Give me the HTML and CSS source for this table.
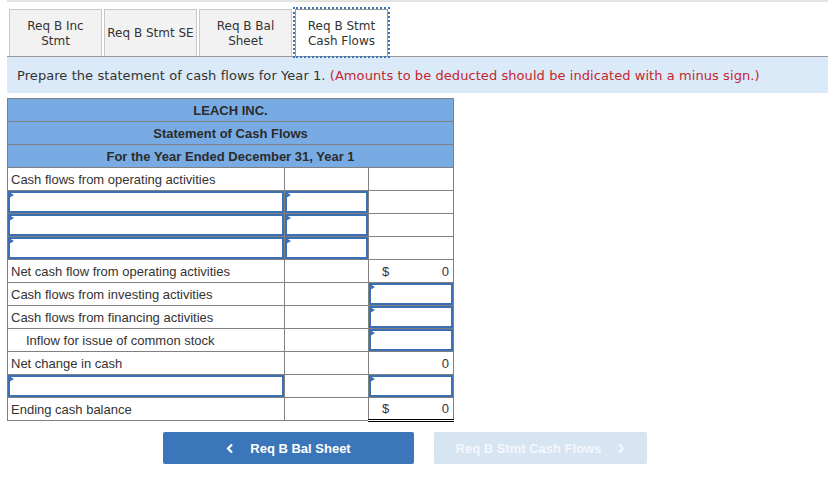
FILE: index.html
```html
<!DOCTYPE html>
<html>
<head>
<meta charset="utf-8">
<link rel="stylesheet" href="styles.css">
</head>
<body>
<div class="page">
  <div class="topbar"></div>
  <div class="tabs">
    <div class="tab">Req B Inc<br>Stmt</div>
    <div class="tab">Req B Stmt SE</div>
    <div class="tab">Req B Bal<br>Sheet</div>
    <div class="tab active">Req B Stmt<br>Cash Flows</div>
  </div>
  <div class="instr"><p class="instr-text">Prepare the statement of cash flows for Year 1. <span class="red">(Amounts to be deducted should be indicated with a minus sign.)</span></p></div>
  <table class="sheet">
    <colgroup><col class="c1"><col class="c2"><col class="c3"></colgroup>
    <tr class="hd"><td colspan="3">LEACH INC.</td></tr>
    <tr class="hd"><td colspan="3">Statement of Cash Flows</td></tr>
    <tr class="hd"><td colspan="3">For the Year Ended December 31, Year 1</td></tr>
    <tr><td class="lbl">Cash flows from operating activities</td><td></td><td></td></tr>
    <tr><td class="in"><div class="inp"></div></td><td class="in"><div class="inp"></div></td><td></td></tr>
    <tr><td class="in"><div class="inp"></div></td><td class="in"><div class="inp"></div></td><td></td></tr>
    <tr><td class="in"><div class="inp"></div></td><td class="in"><div class="inp"></div></td><td></td></tr>
    <tr><td class="lbl">Net cash flow from operating activities</td><td class="sumtop"></td><td><div class="amt"><span>$</span><span>0</span></div></td></tr>
    <tr><td class="lbl">Cash flows from investing activities</td><td></td><td class="in"><div class="inp"></div></td></tr>
    <tr><td class="lbl">Cash flows from financing activities</td><td></td><td class="in"><div class="inp"></div></td></tr>
    <tr><td class="lbl indent">Inflow for issue of common stock</td><td></td><td class="in"><div class="inp"></div></td></tr>
    <tr><td class="lbl">Net change in cash</td><td></td><td class="sumtop"><div class="amt right"><span>0</span></div></td></tr>
    <tr><td class="in"><div class="inp"></div></td><td></td><td class="in"><div class="inp"></div></td></tr>
    <tr><td class="lbl">Ending cash balance</td><td></td><td class="dbl"><div class="amt"><span>$</span><span>0</span></div></td></tr>
  </table>
  <div class="nav">
    <div class="btn prev">
      <svg width="8" height="11" viewBox="0 0 8 11"><polyline points="6,1.5 2,5.5 6,9.5" fill="none" stroke="#ffffff" stroke-width="2.2"/></svg>
      <span>Req B Bal Sheet</span>
    </div>
    <div class="btn next">
      <span>Req B Stmt Cash Flows</span>
      <svg width="8" height="11" viewBox="0 0 8 11"><polyline points="2,1.5 6,5.5 2,9.5" fill="none" stroke="#f3f7fc" stroke-width="2.2"/></svg>
    </div>
  </div>
</div>
</body>
</html>
```
FILE: styles.css
```css
html, body { margin: 0; padding: 0; background: #ffffff; }
.page { margin-left: 7px; }
.topbar { height: 2px; background: #e3e3e3; }
.tabs {
  display: flex;
  align-items: flex-end;
  gap: 2px;
  padding: 7px 0 0 2px;
  border-bottom: 1px solid #9a9a9a;
  height: 47px;
}
.tab {
  box-sizing: border-box;
  width: 93px;
  height: 47px;
  padding-top: 1px;
  background: #f2f2f2;
  border: 1px solid #c8c8c8;
  border-bottom: none;
  display: flex;
  align-items: center;
  justify-content: center;
  text-align: center;
  font-family: "DejaVu Sans", Verdana, sans-serif;
  font-size: 12px;
  line-height: 15px;
  color: #333333;
}
.tab.active {
  background: #ffffff;
  border-color: #9a9a9a;
  outline: 2px dotted #3b74b8;
  position: relative;
  margin-left: 1px;
  z-index: 1;
}
.instr {
  height: 36px;
  background: #dbeaf8;
  display: flex;
  align-items: center;
  padding-left: 10px;
}
.instr-text {
  margin: 0;
  font-family: "DejaVu Sans", Verdana, sans-serif;
  font-size: 13px;
  letter-spacing: 0.07px;
  color: #333333;
}
.red { color: #c4262e; }
.sheet {
  margin-top: 5px;
  border-collapse: collapse;
  table-layout: fixed;
  width: 446px;
  font-family: "Liberation Sans", Arial, sans-serif;
  font-size: 13px;
  color: #333333;
}
.c1 { width: 277px; }
.c2 { width: 84px; }
.c3 { width: 85px; }
.sheet td {
  border: 1px solid #808080;
  height: 22px;
  padding: 0;
  box-sizing: border-box;
}
.sheet tr { height: 23px; }
.hd td {
  background: #78abe4;
  text-align: center;
  font-weight: bold;
  color: #2b2b2b;
}
.lbl { padding-left: 3px !important; }
.indent { padding-left: 18px !important; }
.in { position: relative; }
.inp {
  box-sizing: border-box;
  height: 22px;
  border: 2px solid #3c70b5;
  position: relative;
  background: #ffffff;
}
.inp::before {
  content: "";
  position: absolute;
  left: -1px;
  top: -1px;
  border-left: 5px solid #3c70b5;
  border-top: 3px solid transparent;
  border-bottom: 3px solid transparent;
}
.sheet td.sumtop { border-top: 1px solid #000000; }
.sheet td.dbl { border-bottom: 3px double #000000; }
.amt {
  display: flex;
  justify-content: space-between;
  padding: 0 4px 0 13px;
}
.amt.right { justify-content: flex-end; }
.nav {
  display: flex;
  gap: 20px;
  margin-top: 10px;
  padding-left: 156px;
}
.btn {
  height: 32px;
  border-radius: 2px;
  display: flex;
  align-items: center;
  justify-content: center;
  gap: 16px;
  font-family: "Liberation Sans", Arial, sans-serif;
  font-size: 13px;
  font-weight: bold;
}
.btn.prev { width: 251px; background: #3a76b9; color: #ffffff; }
.btn.next { width: 213px; background: #d7e4f2; color: #f3f7fc; }
```
